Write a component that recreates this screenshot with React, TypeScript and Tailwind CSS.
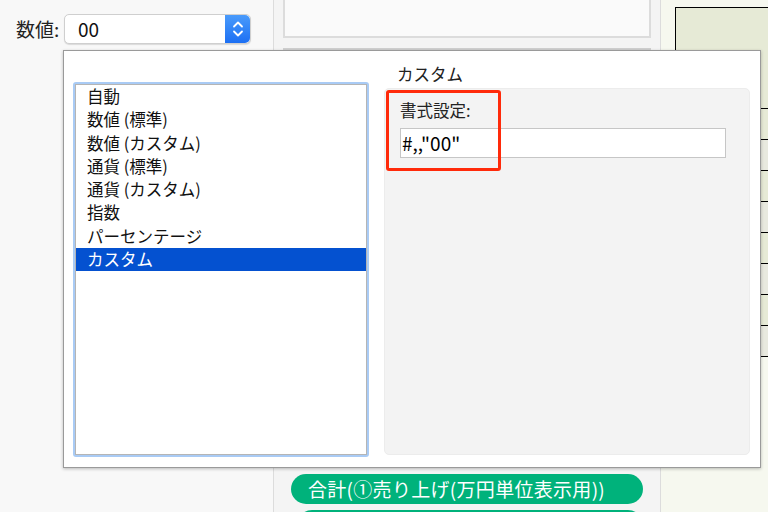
import React from 'react';

const formats = [
  '自動',
  '数値 (標準)',
  '数値 (カスタム)',
  '通貨 (標準)',
  '通貨 (カスタム)',
  '指数',
  'パーセンテージ',
  'カスタム',
];

function Stepper() {
  return (
    <div className="flex w-[25px] flex-col items-center justify-center rounded-r-[5px] bg-gradient-to-b from-[#4a9bfb] to-[#1c6ff3]">
      <svg width="12" height="20" viewBox="0 0 12 20" fill="none" stroke="white" strokeWidth="1.8" strokeLinecap="round" strokeLinejoin="round">
        <path d="M2 7.5 L6 3.5 L10 7.5" />
        <path d="M2 12.5 L6 16.5 L10 12.5" />
      </svg>
    </div>
  );
}

function FormatPopup() {
  return (
    <div className="absolute left-[63px] top-[50px] flex h-[418px] w-[698px] gap-[15px] border border-[#9a9a9a] bg-white pl-[9px] shadow-[0_1px_3px_rgba(0,0,0,0.25)]">
      <div className="mt-[31px] h-[375px] w-[296px] rounded-[3px] bg-[#a9cbf5] p-[2px]">
        <div className="h-full border border-[#b5b5b5] bg-white">
          {formats.map((f, i) => (
            <div
              key={f}
              className={
                i === formats.length - 1
                  ? 'h-[23.3px] bg-[#0451d0] pl-[11px] text-[16.5px] leading-[23.3px] text-white'
                  : 'h-[23.3px] pl-[11px] text-[16.5px] leading-[23.3px] text-[#111]'
              }
            >
              {f}
            </div>
          ))}
        </div>
      </div>

      <div className="flex w-[366px] flex-col">
        <div className="pl-[13px] pt-[11px] text-[16.5px] leading-[24px] text-[#222]">カスタム</div>
        <div className="relative mt-[2px] h-[367px] rounded-[5px] border border-[#ececec] bg-[#f3f3f3] pl-[15px] pt-[9px]">
          <div className="text-[16.5px] leading-[24px] text-[#222]">書式設定:</div>
          <div className="mt-[6px] flex h-[30px] w-[326px] items-center border border-[#c6c6c6] bg-white pl-[1px] text-[19px] text-black">
            #,,"00"
          </div>
          <div className="absolute left-[1px] top-[1px] h-[81px] w-[115px] rounded-[3px] border-[3.5px] border-[#ff2a0a]" />
        </div>
      </div>
    </div>
  );
}

export default function App() {
  const rows = ['bg-[#e6ead6]', 'bg-[#e8e9df]', 'bg-[#e6ead6]', 'bg-[#e8e9df]', 'bg-[#e6ead6]', 'bg-[#e8e9df]', 'bg-[#e6ead6]', 'bg-[#e8e9df]'];
  return (
    <div className="relative flex h-[512px] w-[768px] overflow-hidden font-['Noto_Sans_CJK_JP',sans-serif]">
      {/* left column */}
      <div className="w-[273px] shrink-0 bg-[#f8f8f8] pl-[16px] pt-[14px]">
        <div className="flex items-center">
          <span className="w-[48px] text-[19px] leading-[30px] text-[#222]">数値:</span>
          <div className="flex h-[30px] w-[187px] rounded-[5px] border border-[#cfcfcf] bg-white shadow-[0_1px_1px_rgba(0,0,0,0.12)]">
            <div className="flex-1 pl-[13px] text-[19px] leading-[28px] text-[#111]">00</div>
            <Stepper />
          </div>
        </div>
      </div>

      {/* middle column */}
      <div className="flex w-[388px] shrink-0 flex-col border-x border-[#dcdcdc] bg-[#f4f4f4] px-[9px]">
        <div className="h-[38px] shrink-0 border-x-2 border-b-2 border-[#dcdcdc] bg-[#fafafa]" />
        <div className="mt-[10px] h-[418px] shrink-0 border-x-2 border-t-2 border-[#d0d0d0] bg-[#fafafa]" />
        <div className="mt-[8px] flex shrink-0 flex-col gap-[6px] px-[8px]">
          <div className="flex h-[30px] items-center rounded-full bg-[#00b27b] pl-[17px] text-[19px] tracking-[0.3px] text-white">
            合計(①売り上げ(万円単位表示用))
          </div>
          <div className="ml-[6px] h-[30px] rounded-full bg-[#00b27b]" />
        </div>
      </div>

      {/* right column */}
      <div className="flex-1 bg-[#f6f8ef] pl-[14px] pt-[7px]">
        <div className="border-l border-t border-black">
          <div className="h-[100px] bg-[#e6ead6]" />
          {rows.map((r, i) => (
            <div key={i} className={`h-[31px] border-t border-black ${r}`} />
          ))}
          <div className="border-t border-black" />
        </div>
      </div>

      <FormatPopup />
    </div>
  );
}
